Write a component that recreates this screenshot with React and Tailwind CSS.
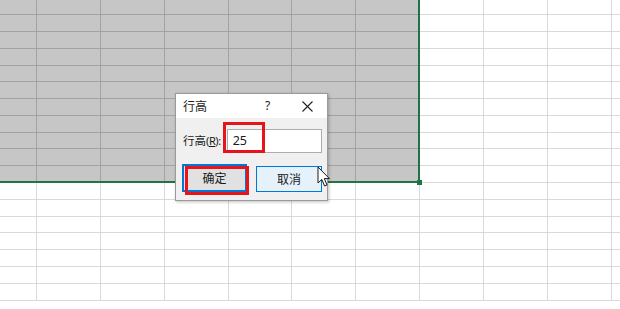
import React from "react";

const rowHeights = [15, 17, 17, 17, 16, 17, 17, 17, 16, 17, 17, 17, 17, 16, 17, 17, 17, 17];
const colWidths = [37, 64, 64, 64, 63, 64, 64, 64, 64, 64];
const SELECTED_ROWS = 11;
const SELECTED_COLS = 7;

function Sheet() {
  return (
    <div className="flex flex-col">
      {rowHeights.map((h, r) => (
        <div key={r} className="flex shrink-0" style={{ height: h }}>
          {colWidths.map((w, c) => {
            const sel = r < SELECTED_ROWS && c < SELECTED_COLS;
            return (
              <div
                key={c}
                className={
                  sel
                    ? "shrink-0 bg-[#c6c6c6] border-r border-b border-[#a2a2a2]"
                    : "shrink-0 bg-white border-r border-b border-[#d9d9d9]"
                }
                style={{ width: w }}
              />
            );
          })}
          <div className="flex-1 bg-white border-b border-[#d9d9d9]" />
        </div>
      ))}
    </div>
  );
}

function Cursor() {
  return (
    <svg width="14" height="22" viewBox="0 0 14 22" className="absolute left-[317px] top-[166px]">
      <path
        d="M1 1 L1 17 L4.8 13.4 L7.6 20 L10 19 L7.3 12.6 L12.4 12.6 Z"
        fill="#ffffff"
        stroke="#1a1a1a"
        strokeWidth="1"
        strokeLinejoin="round"
      />
    </svg>
  );
}

function Dialog() {
  return (
    <div className="absolute left-[175px] top-[93px] w-[153px] h-[108px] border border-[#9a9a9a] bg-[#f0f0f0] shadow-[1px_1px_3px_rgba(0,0,0,0.25)] flex flex-col font-['Noto_Sans_CJK_SC','Noto_Sans',sans-serif] text-[12px] text-[#1a1a1a]">
      <div className="h-[24px] bg-white flex items-center pl-[7px] shrink-0">
        <span className="leading-none">行高</span>
        <span className="ml-[58px] leading-none font-['Noto_Sans',sans-serif]">?</span>
        <svg width="11" height="11" viewBox="0 0 11 11" className="ml-[32px]">
          <path d="M0.5 0.5 L10.5 10.5 M10.5 0.5 L0.5 10.5" stroke="#222" strokeWidth="1.1" />
        </svg>
      </div>
      <div className="flex items-center pl-[7px] pr-[5px] mt-[11px]">
        <span className="leading-none w-[44px] whitespace-nowrap text-[11.5px]">
          行高
          <span className="font-['Noto_Sans',sans-serif] text-[11px] tracking-[-0.4px]">
            (<span className="underline">R</span>):
          </span>
        </span>
        <div className="w-[96px] h-[24px] bg-white border border-[#adadad] flex items-center pl-[5px] font-['Noto_Sans',sans-serif] text-[12.5px]">
          25
        </div>
      </div>
      <div className="flex items-end mt-[11px] pl-[6px]">
        <div className="w-[65px] h-[28px] border-2 border-[#0078d7] bg-[#e1e1e1] flex items-center justify-center">
          确定
        </div>
        <div className="ml-[9px] w-[66px] h-[26px] border border-[#0078d7] bg-[#e5f1fb] flex items-center justify-center">
          取消
        </div>
      </div>
      <div className="absolute left-[47px] top-[28px] w-[42px] h-[31px] border-[3px] border-[#e8131b]" />
      <div className="absolute left-[9px] top-[72px] w-[64px] h-[29px] border-[3px] border-[#e8131b]" />
    </div>
  );
}

export default function App() {
  return (
    <div className="relative w-[620px] h-[309px] overflow-hidden bg-white">
      <Sheet />
      <div className="absolute left-0 top-0 w-[420px] h-[183px] border-r-2 border-b-2 border-[#217346]" />
      <div className="absolute left-[417px] top-[180px] w-[5px] h-[5px] bg-[#217346]" />
      <Dialog />
      <Cursor />
    </div>
  );
}
